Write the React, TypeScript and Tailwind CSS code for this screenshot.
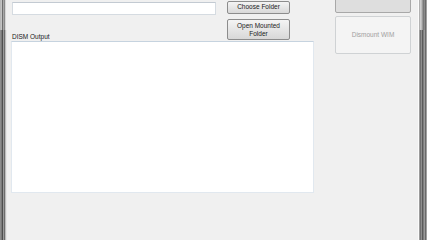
const FONT = { fontFamily: '"Segoe UI", "Liberation Sans", Arial, sans-serif' };

function EdgeLine({ top, rest }: { top: string; rest: string }) {
  return (
    <div className="flex w-px flex-col">
      <div className={`h-[30px] ${top}`} />
      <div className={`flex-1 ${rest}`} />
    </div>
  );
}

export default function App() {
  return (
    <div
      className="flex h-[240px] w-[427px] overflow-hidden bg-[#f0f0f0] text-[6.5px] text-[#1a1a1a]"
      style={FONT}
    >
      {/* left window edge */}
      <div className="flex h-full">
        <EdgeLine top="bg-[#b8b8b8]" rest="bg-[#8c8c8c]" />
        <EdgeLine top="bg-[#c4c4c4]" rest="bg-[#7a7a7a]" />
        <EdgeLine top="bg-[#6e6e6e]" rest="bg-[#4e4e4e]" />
        <EdgeLine top="bg-[#a8a8a8]" rest="bg-[#9a9a9a]" />
        <EdgeLine top="bg-[#8a8a8a]" rest="bg-[#6c6c6c]" />
        <EdgeLine top="bg-[#d6d6d6]" rest="bg-[#bdbdbd]" />
        <EdgeLine top="bg-[#efefef]" rest="bg-[#e6e6e6]" />
      </div>

      <div className="flex flex-1">
        {/* left column: path box, output */}
        <div className="ml-[4px] flex w-[303px] flex-col">
          <div className="flex h-[41px]">
            <div className="flex w-[216px] flex-col">
              <div className="ml-px mt-[2px] h-[13px] w-[204px] border border-[#d5dbe1] border-t-[#c3cad2] bg-white" />
              <div className="ml-px mt-[18px] leading-[8px]">DISM Output</div>
            </div>
            <div className="flex flex-col">
              <button className="mt-px flex h-[13px] w-[63px] items-center justify-center rounded-[2px] border border-[#8c8c8c] bg-gradient-to-b from-[#f4f4f4] to-[#d8d8d8] leading-none">
                Choose Folder
              </button>
              <button className="mt-[5px] flex h-[21px] w-[63px] flex-col items-center justify-center rounded-[2px] border border-[#8c8c8c] bg-gradient-to-b from-[#f4f4f4] to-[#d8d8d8] leading-[8px]">
                <span>Open Mounted</span>
                <span>Folder</span>
              </button>
            </div>
          </div>
          <div className="h-[152px] w-[303px] border border-[#e1e8ef] border-t-[#c6d3df] bg-white" />
        </div>

        {/* right column */}
        <div className="ml-[21px] flex w-[76px] flex-col">
          <div className="-mt-[10px] h-[23px] rounded-[2px] border border-[#a8a8a8] bg-[#dedede]" />
          <div className="mt-[3px] flex h-[38px] items-center justify-center rounded-[2px] border border-[#cfd2d4] bg-[#f4f4f4] text-[#a0a0a0]">
            Dismount WIM
          </div>
        </div>
      </div>

      {/* right window edge */}
      <div className="flex h-full">
        <EdgeLine top="bg-[#fbfbfb]" rest="bg-[#fbfbfb]" />
        <EdgeLine top="bg-[#b0b0b0]" rest="bg-[#9c9c9c]" />
        <EdgeLine top="bg-[#cfcfcf]" rest="bg-[#707070]" />
        <EdgeLine top="bg-[#bdbdbd]" rest="bg-[#8e8e8e]" />
        <EdgeLine top="bg-[#9a9a9a]" rest="bg-[#5a5a5a]" />
        <EdgeLine top="bg-[#7a7a7a]" rest="bg-[#7e7e7e]" />
        <EdgeLine top="bg-[#8a8a8a]" rest="bg-[#9a9a9a]" />
        <EdgeLine top="bg-[#6a6a6a]" rest="bg-[#6a6a6a]" />
        <EdgeLine top="bg-[#a0a0a0]" rest="bg-[#a0a0a0]" />
      </div>
    </div>
  );
}
